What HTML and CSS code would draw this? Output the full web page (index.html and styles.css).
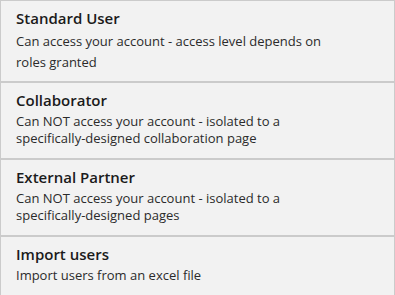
FILE: index.html
```html
<!DOCTYPE html>
<html lang="en">
<head>
  <meta charset="UTF-8">
  <title>Add users</title>
  <link rel="stylesheet" href="styles.css">
</head>
<body>

<div class="options">
  <div class="option option-wide">
    <div class="option-title">Standard User</div>
    <div class="option-desc">Can access your account - access level depends on roles granted</div>
  </div>
  <div class="option">
    <div class="option-title">Collaborator</div>
    <div class="option-desc">Can NOT access your account - isolated to a specifically-designed collaboration page</div>
  </div>
  <div class="option">
    <div class="option-title">External Partner</div>
    <div class="option-desc">Can NOT access your account - isolated to a specifically-designed pages</div>
  </div>
  <div class="option">
    <div class="option-title">Import users</div>
    <div class="option-desc">Import users from an excel file</div>
  </div>
</div>

</body>
</html>
```

FILE: styles.css
```css
body {
  margin: 0;
  font-family: 'Open Sans', 'Segoe UI', sans-serif;
  background-color: #fff;
}

.options {
  width: 395px;
}

.option {
  background-color: #f2f2f2;
  border: 1px solid #cbcbcb;
  padding: 7px 16px 11px 15px;
}

.option-wide {
  padding-bottom: 8px;
}

.option-title {
  font-size: 15px;
  font-weight: 600;
  line-height: 20px;
  color: #1b1b1b;
  margin-bottom: 3px;
}

.option-desc {
  font-size: 13px;
  line-height: 17px;
  color: #2b2b2b;
  padding-right: 40px;
}

.option-wide .option-desc {
  line-height: 21px;
}
```
